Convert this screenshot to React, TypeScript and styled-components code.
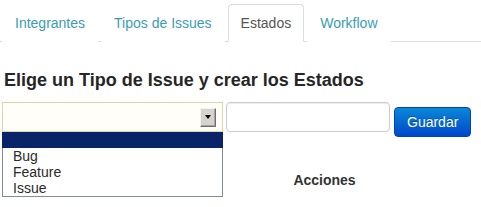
import React from "react";
import styled, { createGlobalStyle } from "styled-components";

const Global = createGlobalStyle`
  html, body { margin: 0; padding: 0; background: #fff; }
  body { font-family: "Liberation Sans", Arial, sans-serif; font-size: 14px; color: #333; }
`;

const Page = styled.div`
  width: 481px;
  height: 207px;
  overflow: hidden;
  padding-top: 4px;
  box-sizing: border-box;
`;

const Tabs = styled.ul`
  display: flex;
  list-style: none;
  margin: 0;
  padding: 0 0 0 2px;
  border-bottom: 1px solid #ddd;
`;

const Tab = styled.li<{ $active?: boolean }>`
  margin-right: 3px;
  margin-bottom: -1px;
  padding: 8px 12px;
  line-height: 20px;
  font-size: 14px;
  border: 1px solid ${(p) => (p.$active ? "#ddd" : "transparent")};
  border-bottom-color: ${(p) => (p.$active ? "#fff" : "transparent")};
  border-radius: 4px 4px 0 0;
  background: #fff;
  color: ${(p) => (p.$active ? "#555" : "#3a9db3")};
  cursor: pointer;
`;

const Heading = styled.h3`
  margin: 28px 0 12px 4px;
  font-size: 18px;
  line-height: 20px;
  font-weight: bold;
  color: #262626;
`;

const FormRow = styled.div`
  display: flex;
  align-items: flex-start;
  padding-left: 2px;
  gap: 3px;
`;

const SelectWrap = styled.div`
  position: relative;
  width: 221px;
`;

const SelectBox = styled.div`
  box-sizing: border-box;
  height: 30px;
  border: 1px solid #e3d5a9;
  background: #fffef9;
  display: flex;
  align-items: center;
  justify-content: flex-end;
  padding-right: 6px;
`;

const ArrowButton = styled.div`
  box-sizing: border-box;
  width: 16px;
  height: 19px;
  background: #d6d3cc;
  border: 1px solid;
  border-color: #f4f3ef #6f6d68 #6f6d68 #f4f3ef;
  box-shadow: inset -1px -1px 0 #a9a69f;
  display: flex;
  align-items: center;
  justify-content: center;
`;

const Arrow = styled.span`
  width: 0;
  height: 0;
  border-left: 3.5px solid transparent;
  border-right: 3.5px solid transparent;
  border-top: 4px solid #000;
`;

const List = styled.ul`
  position: absolute;
  top: 30px;
  left: 0;
  width: 221px;
  box-sizing: border-box;
  margin: 0;
  padding: 0;
  list-style: none;
  background: #fff;
  border: 1px solid #7f8e9c;
  border-top: none;
  z-index: 2;
`;

const Option = styled.li<{ $selected?: boolean }>`
  height: 16px;
  line-height: 16px;
  padding-left: 10px;
  font-size: 14px;
  color: #2a2a2a;
  background: ${(p) => (p.$selected ? "#0a246a" : "transparent")};
  margin: 0 ${(p) => (p.$selected ? "-1px" : "0")};
`;

const TextInput = styled.input`
  box-sizing: border-box;
  width: 164px;
  height: 30px;
  margin: 0;
  border: 1px solid #ccc;
  border-radius: 4px;
  padding: 4px 6px;
  font-family: inherit;
  font-size: 14px;
  box-shadow: inset 0 1px 1px rgba(0, 0, 0, 0.075);
  outline: none;
`;

const Button = styled.button`
  box-sizing: border-box;
  margin: 5px 0 0 1px;
  height: 30px;
  padding: 4px 12px;
  font-family: inherit;
  font-size: 14px;
  line-height: 20px;
  color: #fff;
  border: 1px solid #0045b0;
  border-radius: 4px;
  background: linear-gradient(to bottom, #0a88d8, #0048cc);
  text-shadow: 0 -1px 0 rgba(0, 0, 0, 0.25);
`;

const TableHead = styled.div`
  display: grid;
  grid-template-columns: 168px 1fr;
  margin-top: 33px;
`;

const HeadCell = styled.div`
  font-weight: bold;
  font-size: 14px;
  line-height: 20px;
  text-align: center;
  color: #333;
`;

export default function App() {
  return (
    <Page>
      <Global />
      <Tabs>
        <Tab>Integrantes</Tab>
        <Tab>Tipos de Issues</Tab>
        <Tab $active>Estados</Tab>
        <Tab>Workflow</Tab>
      </Tabs>
      <Heading>Elige un Tipo de Issue y crear los Estados</Heading>
      <FormRow>
        <SelectWrap>
          <SelectBox>
            <ArrowButton>
              <Arrow />
            </ArrowButton>
          </SelectBox>
          <List>
            <Option $selected>&nbsp;</Option>
            <Option>Bug</Option>
            <Option>Feature</Option>
            <Option>Issue</Option>
          </List>
        </SelectWrap>
        <TextInput type="text" />
        <Button>Guardar</Button>
      </FormRow>
      <TableHead>
        <HeadCell></HeadCell>
        <HeadCell>Acciones</HeadCell>
      </TableHead>
    </Page>
  );
}
